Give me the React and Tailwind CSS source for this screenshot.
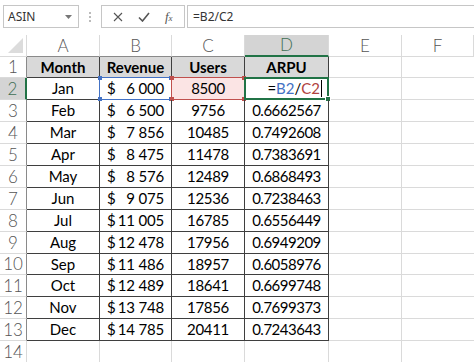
import React from 'react';

const rows = [
  ['Jan', '6 000', '8500', null],
  ['Feb', '6 500', '9756', '0.6662567'],
  ['Mar', '7 856', '10485', '0.7492608'],
  ['Apr', '8 475', '11478', '0.7383691'],
  ['May', '8 576', '12489', '0.6868493'],
  ['Jun', '9 075', '12536', '0.7238463'],
  ['Jul', '11 005', '16785', '0.6556449'],
  ['Aug', '12 478', '17956', '0.6949209'],
  ['Sep', '11 486', '18957', '0.6058976'],
  ['Oct', '12 489', '18641', '0.6699748'],
  ['Nov', '13 748', '17856', '0.7699373'],
  ['Dec', '14 785', '20411', '0.7243643'],
];

const rowHeight = (n) => (n === 1 || n === 10 ? 'h-[21px]' : 'h-[22px]');

const Corners = ({ color }) => (
  <>
    <span className={`absolute -left-[2px] -top-[2px] w-[4px] h-[4px] ${color}`} />
    <span className={`absolute -right-[2px] -top-[2px] w-[4px] h-[4px] ${color}`} />
    <span className={`absolute -left-[2px] -bottom-[2px] w-[4px] h-[4px] ${color}`} />
    <span className={`absolute -right-[2px] -bottom-[2px] w-[4px] h-[4px] ${color}`} />
  </>
);

const FormulaBar = () => (
  <div className="h-[35px] flex items-start pt-[5px] pl-[3px] font-['Noto_Sans',sans-serif] text-[12px] text-[#333]">
    <div className="w-[76px] h-[23px] border border-[#c6c6c6] flex items-center justify-between pl-[4px] pr-[6px]">
      <span>ASIN</span>
      <svg width="7" height="4" viewBox="0 0 7 4"><path d="M0 0h7L3.5 4z" fill="#777" /></svg>
    </div>
    <div className="w-[22px] h-[23px] flex flex-col items-center justify-center gap-[2px]">
      <span className="w-[2px] h-[2px] bg-[#bbb]" />
      <span className="w-[2px] h-[2px] bg-[#bbb]" />
      <span className="w-[2px] h-[2px] bg-[#bbb]" />
    </div>
    <div className="w-[84px] h-[23px] border border-[#c6c6c6] flex items-center justify-around px-[4px]">
      <svg width="10" height="10" viewBox="0 0 10 10"><path d="M1 1l8 8M9 1l-8 8" stroke="#555" strokeWidth="1.1" /></svg>
      <svg width="12" height="10" viewBox="0 0 12 10"><path d="M1 5.5l3.5 3.5L11 1" stroke="#555" strokeWidth="1.6" fill="none" /></svg>
      <span className="font-['Liberation_Serif',serif] italic text-[13px] text-[#555] leading-none">
        f<span className="text-[9px]">x</span>
      </span>
    </div>
    <div className="ml-[2px] flex-1 h-[23px] border border-[#c6c6c6] border-r-0 flex items-center pl-[5px]">
      =B2/C2
    </div>
  </div>
);

export default function App() {
  const dark = 'border-[#3f3f3f]';
  const light = 'border-[#dadada]';
  const cols = ['A', 'B', 'C', 'D', 'E', 'F'];

  return (
    <div className="w-[474px] h-[362px] overflow-hidden bg-white font-['Lato',sans-serif] text-[15px] text-black">
      <FormulaBar />
      <div className="grid grid-cols-[27px_73px_72px_73px_84px_73px_72px]">
        {/* column letters */}
        <div className={`relative h-[22px] border-r border-b ${light}`}>
          <svg className="absolute right-[3px] bottom-[3px]" width="15" height="15" viewBox="0 0 15 15">
            <path d="M15 0V15H0z" fill="#dcdcdc" />
          </svg>
        </div>
        {cols.map((c) => (
          <div
            key={c}
            className={`h-[22px] flex items-center justify-center text-[17px] font-light border-r ${light} ${
              c === 'D'
                ? 'bg-[#d4d4d4] text-[#3f6f55] border-b-2 border-b-[#217346]'
                : c === 'E' || c === 'F'
                ? `text-[#555] border-b ${light}`
                : `text-[#555] border-b border-b-[#8a8a8a]`
            }`}
          >
            {c}
          </div>
        ))}

        {/* row 1 header */}
        <div className={`${rowHeight(1)} flex items-center justify-center text-[17px] font-light text-[#555] border-r border-b border-r-[#8a8a8a] border-b-[#dadada]`}>1</div>
        {['Month', 'Revenue', 'Users', 'ARPU'].map((h) => (
          <div key={h} className={`${rowHeight(1)} bg-[#d9d9d9] font-bold flex items-center justify-center border-r border-b ${dark}`}>
            {h}
          </div>
        ))}
        <div className={`${rowHeight(1)} border-r border-b ${light}`} />
        <div className={`${rowHeight(1)} border-b ${light}`} />

        {rows.map((r, i) => {
          const n = i + 2;
          const h = rowHeight(n);
          const first = n === 2;
          return (
            <React.Fragment key={n}>
              <div
                className={`${h} flex items-center justify-center text-[17px] font-light border-b ${light} ${
                  first
                    ? 'bg-[#d4d4d4] text-[#3f6f55] border-r-2 border-r-[#217346]'
                    : 'text-[#555] border-r border-r-[#8a8a8a]'
                }`}
              >
                {n}
              </div>
              <div className={`${h} flex items-center justify-center border-r border-b ${dark}`}>{r[0]}</div>
              <div className={`${h} relative flex items-center justify-between pl-[7px] pr-[7px] border-r border-b ${dark}`}>
                <span>$</span>
                <span className="tracking-[-0.2px]">{r[1]}</span>
                {first && (
                  <span className="absolute -left-px -top-px right-[-1px] bottom-[-1px] border border-[#4472c4]">
                    <Corners color="bg-[#4472c4]" />
                  </span>
                )}
              </div>
              <div className={`${h} relative flex items-center justify-center tracking-[-0.3px] border-r border-b ${dark} ${first ? 'bg-[#fbe4e4]' : ''}`}>
                <span className="relative">{r[2]}</span>
                {first && (
                  <span className="absolute -left-px -top-px right-[-1px] bottom-[-1px] border border-[#c0504d]">
                    <Corners color="bg-[#c0504d]" />
                  </span>
                )}
              </div>
              <div className={`${h} relative flex items-center border-r border-b ${dark} ${first ? 'justify-end pr-[6px]' : 'justify-center tracking-[-0.5px]'}`}>
                {first ? (
                  <>
                    <span>=</span>
                    <span className="text-[#4472c4]">B2</span>
                    <span>/</span>
                    <span className="text-[#b0433f]">C2</span>
                    <span className="ml-[1px] w-px h-[17px] bg-black" />
                    <span className="absolute -left-px -top-px right-[-1px] bottom-[-1px] border-2 border-[#217346]">
                      <span className="absolute -right-[4px] -bottom-[4px] w-[6px] h-[6px] bg-[#217346] border border-white" />
                    </span>
                  </>
                ) : (
                  r[3]
                )}
              </div>
              <div className={`${h} border-r border-b ${light}`} />
              <div className={`${h} border-b ${light}`} />
            </React.Fragment>
          );
        })}

        {/* row 14 */}
        <div className={`h-[22px] flex items-center justify-center text-[17px] font-light text-[#555] border-r border-b ${light}`}>14</div>
        {cols.map((c) => (
          <div key={c} className={`h-[22px] ${c === 'F' ? '' : 'border-r'} border-b ${light}`} />
        ))}
      </div>
    </div>
  );
}
